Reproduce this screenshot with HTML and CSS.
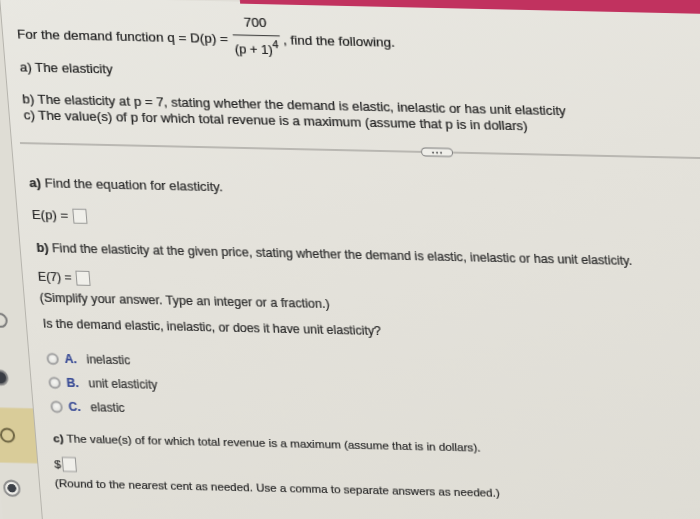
FILE: index.html
```html
<!DOCTYPE html>
<html lang="en">
<head>
<meta charset="utf-8">
<title>Elasticity of demand</title>
<link rel="stylesheet" href="styles.css">
</head>
<body>
<div class="screen">
  <aside class="rail">
    <span class="dot dot-empty"></span>
    <span class="dot dot-dark"></span>
    <div class="rail-current"><span class="dot dot-olive"></span></div>
    <span class="dot dot-ring"></span>
  </aside>
  <main class="page">
    <div class="brandbar"></div>
    <div class="stem">
      <span class="stem-text">For the demand function q = D(p) =</span>
      <span class="frac"><span class="num">700</span><span class="den">(p + 1)<sup>4</sup></span></span>
      <span class="stem-text">, find the following.</span>
    </div>
    <p class="task task-a">a) The elasticity</p>
    <p class="task task-b">b) The elasticity at p = 7, stating whether the demand is elastic, inelastic or has unit elasticity</p>
    <p class="task task-c">c) The value(s) of p for which total revenue is a maximum (assume that p is in dollars)</p>

    <div class="divider">
      <span class="rule rule-left"></span>
      <span class="more"><i></i><i></i><i></i></span>
      <span class="rule rule-right"></span>
    </div>

    <p class="q q-a"><b>a)</b> Find the equation for elasticity.</p>
    <p class="ans ans-ep">E(p) = <span class="box"></span></p>

    <p class="q q-b"><b>b)</b> Find the elasticity at the given price, stating whether the demand is elastic, inelastic or has unit elasticity.</p>
    <p class="ans ans-e7">E(7) = <span class="box"></span></p>
    <p class="hint hint-b">(Simplify your answer. Type an integer or a fraction.)</p>
    <p class="q q-is">Is the demand elastic, inelastic, or does it have unit elasticity?</p>

    <ul class="choices">
      <li class="choice choice-a"><span class="radio"></span><b class="letter">A.</b><span>inelastic</span></li>
      <li class="choice choice-b"><span class="radio"></span><b class="letter">B.</b><span>unit elasticity</span></li>
      <li class="choice choice-c"><span class="radio"></span><b class="letter">C.</b><span>elastic</span></li>
    </ul>

    <p class="q q-c"><b>c)</b> The value(s) of for which total revenue is a maximum (assume that is in dollars).</p>
    <p class="ans ans-dollar">$<span class="box"></span></p>
    <p class="hint hint-c">(Round to the nearest cent as needed. Use a comma to separate answers as needed.)</p>
  </main>
</div>
</body>
</html>
```

FILE: styles.css
```css
html, body {
  margin: 0;
  padding: 0;
}
body {
  width: 700px;
  height: 519px;
  overflow: hidden;
  background: #e0ded7;
  font-family: "Liberation Sans", Arial, sans-serif;
  color: #242424;
}
.screen {
  width: 820px;
  height: 580px;
  display: flex;
  transform-origin: 0 0;
  transform: matrix(1, 0.022, 0.082, 1, -40, -4.5);
  background: linear-gradient(165deg, #e9e8e2 0%, #e4e2db 40%, #dddbd3 100%);
  filter: blur(0.3px);
  -webkit-text-stroke: 0.2px currentColor;
}

/* left question rail */
.rail {
  flex: 0 0 40px;
  display: flex;
  flex-direction: column;
  align-items: flex-start;
  border-right: 1px solid #b6b4ad;
  box-sizing: border-box;
  padding-top: 317px;
  background: #dfddd5;
}
.dot {
  display: block;
  box-sizing: border-box;
  border-radius: 50%;
}
.dot-empty {
  width: 15px;
  height: 15px;
  margin-left: 6px;
  border: 2px solid #7c7c7c;
}
.dot-dark {
  width: 16px;
  height: 16px;
  margin-left: 1px;
  margin-top: 42px;
  border: 2px solid #8a8a8a;
  background: #3a3d44;
}
.rail-current {
  margin-top: 22px;
  width: 39px;
  height: 55px;
  background: #d9cc99;
  display: flex;
  align-items: center;
}
.dot-olive {
  width: 15px;
  height: 15px;
  margin-left: 4px;
  border: 2px solid #6d6442;
}
.dot-ring {
  width: 17px;
  height: 17px;
  margin-left: 3px;
  margin-top: 17px;
  border: 2px solid #8f8f8f;
  background: radial-gradient(circle, #3d4148 0 4px, #eeede9 4.5px);
}

/* main page */
.page {
  flex: 1;
  display: flex;
  flex-direction: column;
  align-items: flex-start;
  padding-left: 14px;
}
.brandbar {
  align-self: stretch;
  margin-left: 226px;
  margin-top: -18px;
  height: 20px;
  background: #c1325f;
}
.stem {
  display: flex;
  align-items: center;
  margin-top: 11px;
  font-size: 13.5px;
  color: #222;
}
.stem-text {
  line-height: 16px;
  padding-top: 7px;
  white-space: pre;
}
.frac {
  display: flex;
  flex-direction: column;
  align-items: center;
  margin: 0 3px 0 5px;
}
.num {
  line-height: 16px;
  margin-bottom: 4px;
  font-size: 13.5px;
}
.den {
  border-top: 1px solid #333;
  padding: 6px 2px 0 1px;
  line-height: 16px;
  font-size: 13px;
}
.den sup {
  font-size: 11px;
  line-height: 0;
  vertical-align: 6px;
}

p {
  margin: 0;
  line-height: 16px;
  white-space: nowrap;
}
.task {
  font-size: 13.3px;
  color: #222;
}
.task-a { margin-top: 7px; }
.task-b { margin-top: 16px; }
.task-c { margin-top: 0; }

.divider {
  align-self: stretch;
  display: flex;
  align-items: center;
  height: 9px;
  margin-top: 15px;
  margin-left: -6px;
}
.rule {
  height: 1px;
  background: #8e8d89;
}
.rule-left { width: 401px; }
.rule-right { flex: 1; }
.more {
  width: 32px;
  height: 9px;
  box-sizing: border-box;
  border: 1.5px solid #7b7b7b;
  border-radius: 5px;
  background: #efeee9;
  display: flex;
  align-items: center;
  justify-content: center;
  gap: 2px;
  -webkit-text-stroke: 0;
}
.more i {
  width: 2px;
  height: 2px;
  border-radius: 50%;
  background: #555;
}

.q, .ans, .hint {
  color: #2a2a2a;
}
.q b { font-weight: bold; }
.q-a { margin-top: 27px; font-size: 13.2px; }
.ans {
  display: flex;
  align-items: center;
  gap: 5px;
}
.ans-ep { margin-top: 16px; font-size: 13.2px; }
.q-b { margin-top: 17px; padding-left: 2px; font-size: 12.6px; }
.ans-e7 { margin-top: 13px; padding-left: 1px; font-size: 12.2px; gap: 4px; }
.hint-b { margin-top: 5px; padding-left: 1px; font-size: 12.55px; }
.q-is { margin-top: 10px; padding-left: 2px; font-size: 12.4px; }
.box {
  display: inline-block;
  width: 14px;
  height: 15px;
  box-sizing: border-box;
  border: 1px solid #979795;
  background: #f0efea;
  -webkit-text-stroke: 0;
}

.choices {
  list-style: none;
  margin: 19px 0 0 0;
  padding: 0 0 0 3px;
  display: flex;
  flex-direction: column;
  gap: 8px;
}
.choice {
  display: flex;
  align-items: center;
  height: 16px;
  font-size: 12px;
  color: #333;
}
.radio {
  width: 12px;
  height: 12px;
  box-sizing: border-box;
  border-radius: 50%;
  border: 2px solid #a2a2a2;
  background: radial-gradient(circle at 50% 40%, #f6f6f3, #dcdcd8);
  margin-right: 6px;
}
.letter {
  color: #3a4c96;
  font-weight: bold;
  width: 22px;
}
.q-c { margin-top: 16px; padding-left: 3px; font-size: 11.7px; }
.ans-dollar { margin-top: 9px; padding-left: 2px; gap: 1px; font-size: 11.7px; }
.hint-c { margin-top: 3px; padding-left: 1px; font-size: 11.6px; }
```
